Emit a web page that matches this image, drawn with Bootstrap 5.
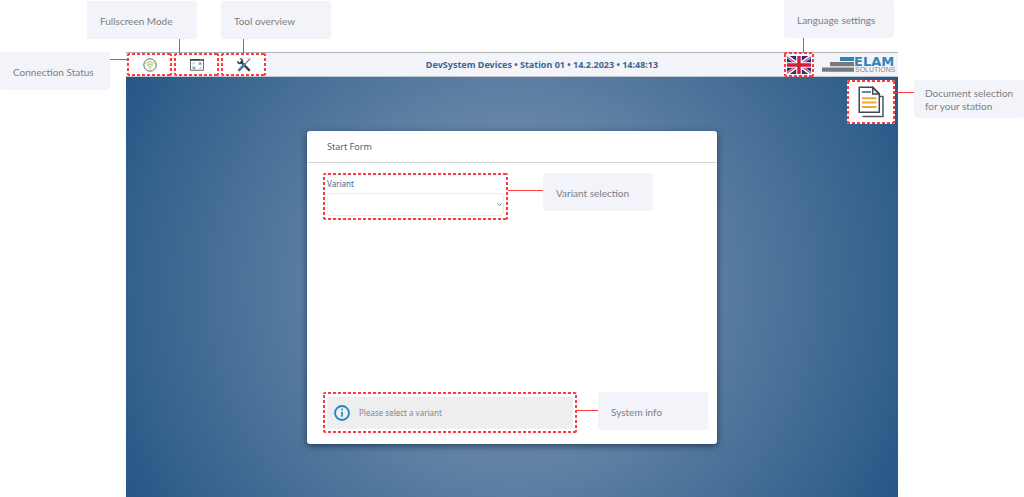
<!DOCTYPE html>
<html lang="en">
<head>
<meta charset="utf-8">
<meta name="viewport" content="width=device-width, initial-scale=1">
<title>Start Form</title>
<link href="https://cdn.jsdelivr.net/npm/bootstrap@5.3.0/dist/css/bootstrap.min.css" rel="stylesheet">
<style>
  :root { --mark: #ff3a3e; --panel: #f3f4f9; --ink: #3c6690; }
  body { font-family: "Noto Sans", "Open Sans", sans-serif; font-size: 8px; line-height: 12px; color: var(--ink); background: #fff; }
  .station { margin: 52px 126px 0; min-height: calc(100vh - 52px); }
  .topbar { background: var(--panel); border-top: 1px solid #b3b3b5; border-bottom: 1px solid #c3c7cd; height: 25px; padding-left: 1px; }
  .topbar .title { font-size: 9px; font-weight: 700; padding-left: 34px; }
  .toolset { gap: 2px; }
  .stage { background: radial-gradient(circle, #89a0b9 0%, #5a7da1 47%, #275786 100%); padding: 3px 3px 50px; }

  /* highlighted area with a dashed outline */
  .spot { position: relative; }
  .spot::after {
    content: ""; position: absolute; inset: 0; pointer-events: none; border-radius: 2px;
    background:
      repeating-linear-gradient(90deg, var(--mark) 0 3px, transparent 3px 5px) top / 100% 2px no-repeat,
      repeating-linear-gradient(90deg, var(--mark) 0 3px, transparent 3px 5px) bottom / 100% 2px no-repeat,
      repeating-linear-gradient(0deg, var(--mark) 0 3px, transparent 3px 5px) left / 2px 100% no-repeat,
      repeating-linear-gradient(0deg, var(--mark) 0 3px, transparent 3px 5px) right / 2px 100% no-repeat;
  }
  .tool { width: 45px; height: 23px; }
  .tool button, .docs button { background: #fff; border-radius: 2px; }
  .lang { width: 30px; height: 25px; }
  .docs { width: 48px; height: 44px; }

  /* callout box and its connector */
  .note { position: absolute; z-index: 2; width: 110px; height: 38px; padding: 2px 0 0 13px; background: var(--panel); border-radius: 3px; color: #7d7e82; font-family: Lato, "Open Sans", sans-serif; font-size: 10px; line-height: 13px; }
  .note::before { content: ""; position: absolute; background: var(--mark); }
  .note-up { bottom: calc(100% + 14px); left: 0; }
  .note-up::before { top: 100%; left: 22px; width: 1px; height: 15px; }
  .note-full { left: -87px; }
  .note-full::before { left: 92px; }
  .note-lang::before { left: 19px; }
  .note-left { right: calc(100% + 17px); top: -1px; }
  .note-left::before { left: 100%; top: 7px; width: 17px; height: 1px; }
  .note-right { left: calc(100% + var(--reach)); top: 0; }
  .note-right::before { right: 100%; top: var(--drop); width: var(--reach); height: 1px; }
  .note-docs { --reach: 19px; --drop: 12px; padding-left: 11px; }
  .note-variant { --reach: 35px; --drop: 17px; }
  .note-info { --reach: 21px; --drop: 18px; }

  .startform { width: 410px; min-height: 313px; border-radius: 3px; background: #fff; box-shadow: 0 2px 7px rgba(10, 30, 55, .65); margin-top: 7px; }
  .startform h1 { font-size: 9px; line-height: 14px; font-weight: 400; padding: 9px 20px 8px; border-bottom: 1px solid #d5d5d6; }
  .startform .fields { padding: 10px 16px 11px; }
  .variant { width: 185px; height: 47px; padding: 5px 4px 3px; }
  .variant label { line-height: 12px; margin-bottom: 3px; }
  .variant select { height: 23px; min-height: 0; padding: 0 16px 0 6px; font-size: 8px; border: 1px solid #ececee; border-radius: 3px; background-position: right 1px center; background-size: 5px 5px; }
  .info { width: 254px; height: 41px; padding: 5px 4px 4px; }
  .info output { background: #eee; border-radius: 2px; font-size: 8px; color: #85868a; padding-left: 7px; gap: 9px; }
</style>
</head>
<body>
<main class="station d-flex flex-column">
  <header class="topbar d-flex align-items-center">
    <div class="d-flex toolset">
      <div class="spot tool">
        <button type="button" class="btn p-0 border-0 w-100 h-100 d-flex align-items-center justify-content-center" aria-label="Connection status">
          <svg width="14" height="14" viewBox="0 0 14 14" fill="none"><circle cx="7" cy="7" r="6.2" stroke="#66676b"/><path d="M2.500 5.300Q7 1.500 11.500 5.300L7 11.200z" fill="#e3f1cc"/><path d="M2.500 5.400Q7 1.900 11.500 5.400M4 7.300Q7 5 10 7.300M5.500 9.200Q7 8 8.500 9.200" stroke="#b0d37a"/><circle cx="7" cy="10.700" r=".7" fill="#b0d37a"/></svg>
        </button>
        <div class="note note-left d-flex align-items-center">Connection Status</div>
      </div>
      <div class="spot tool">
        <button type="button" class="btn p-0 border-0 w-100 h-100 d-flex align-items-center justify-content-center" aria-label="Fullscreen mode">
          <svg width="14" height="12" viewBox="0 0 14 12" fill="none"><path d="M.5 1v10.3h13V1" stroke="#6c6e73"/><path d="M0 0h14v1.800H0z" fill="#424448"/><path d="M10 .8h.8M11.8.8h.8" stroke="#ddd" stroke-width=".7"/><path d="M8.3 6l2.5-2M8.4 3.9h2.5v2.3M5.7 7.5L3.2 9.700M3.1 7.3v2.5h2.5" stroke="#5d86aa" stroke-width=".9"/><path d="M3 5.7V4h2M11 7.7v2H9" stroke="#95a8b8" stroke-width=".7"/></svg>
        </button>
        <div class="note note-up note-full d-flex align-items-center">Fullscreen Mode</div>
      </div>
      <div class="spot tool">
        <button type="button" class="btn p-0 border-0 w-100 h-100 d-flex align-items-center justify-content-center" aria-label="Tool overview">
          <svg width="14" height="14" viewBox="0 0 14 14" fill="none"><path d="M4.2 4.2l7.9 7.9" stroke="#3d4046" stroke-width="2.4" stroke-linecap="round"/><path d="M2.5.4l2 2-.4 1.7-1.7.5-2-2C-.2 4.3.7 6.1 2.8 6.3c2.1.1 3.8-1.5 3.4-3.7C5.8.8 4.1-.1 2.5.4z" fill="#3d4046"/><path d="M12.9.9L7.2 6.8" stroke="#617f9d" stroke-width="1.2"/><path d="M7.3 6.7l-5.2 5.4" stroke="#4d7ba8" stroke-width="2.8" stroke-linecap="round"/><path d="M11.9.6l1.5 1.3" stroke="#526f8c" stroke-width="1"/></svg>
        </button>
        <div class="note note-up d-flex align-items-center">Tool overview</div>
      </div>
    </div>
    <div class="title mx-auto text-nowrap">DevSystem Devices • Station 01 • 14.2.2023 • 14:48:13</div>
    <div class="spot lang">
      <button type="button" class="btn p-0 border-0 w-100 h-100 d-flex align-items-center justify-content-center" aria-label="Language settings">
        <svg width="24" height="18" viewBox="0 0 24 18"><path fill="#27347c" d="M0 0h24v18H0z"/><path d="M0 0l24 18M24 0L0 18" stroke="#fff" stroke-width="3.2"/><path d="M0 .6L10 8M24 .6L14 8M0 17.4L10 10M24 17.4L14 10" stroke="#d42845" stroke-width="1.1"/><path d="M12 0v18M0 9h24" stroke="#fff" stroke-width="5.600"/><path d="M12 0v18M0 9h24" stroke="#d21c3c" stroke-width="3.4"/></svg>
      </button>
      <div class="note note-up note-lang d-flex align-items-center">Language settings</div>
    </div>
    <svg class="ms-2" width="76" height="18" viewBox="0 0 76 18" overflow="visible" role="img" aria-label="ELAM Solutions"><path fill="#3283b7" d="M18 1h14v4H18z"/><path fill="#77797c" d="M8 6h24v4.300H8zM0 11.500h32v4.300H0z"/><text x="32" y="10" font-family="DejaVu Sans, sans-serif" font-weight="700" font-size="13" fill="#3283b7">ELAM</text><text x="33" y="16" font-family="Liberation Sans, sans-serif" font-size="7" fill="#85878b">SOLUTIONS</text></svg>
  </header>

  <section class="stage flex-grow-1 d-flex flex-column">
    <div class="spot docs ms-auto">
      <button type="button" class="btn p-0 border-0 w-100 h-100 d-flex align-items-center justify-content-center" aria-label="Document selection">
        <svg width="26" height="32" viewBox="0 0 26 32" fill="none"><path d="M4.500 30.500h20.500V10.500h-3" stroke="#55575c" stroke-width="1.500"/><path d="M1.200 1.200H15l6.300 6.500v18.600H1.200z" fill="#fff" stroke="#45474c" stroke-width="1.500"/><path d="M14.700 1.500v6.500h6.300z" fill="#eee" stroke="#45474c" stroke-width="1.400"/><path d="M4 6h9" stroke="#4d7ba7" stroke-width="1.800"/><path d="M4 12.300h14.500M4 16.600h14.500M4 20.900h14.500" stroke="#e8ac36" stroke-width="2"/></svg>
      </button>
      <div class="note note-right note-docs d-flex align-items-center">Document selection<br>for your station</div>
    </div>

    <form class="startform mx-auto d-flex flex-column">
      <h1 class="m-0">Start Form</h1>
      <div class="fields flex-grow-1 d-flex flex-column justify-content-between">
        <div class="spot variant">
          <label class="d-block" for="variant">Variant</label>
          <select class="form-select shadow-none" id="variant"><option value="" selected></option></select>
          <div class="note note-right note-variant d-flex align-items-center">Variant selection</div>
        </div>
        <div class="spot info">
          <output class="d-flex align-items-center h-100">
            <svg width="16" height="16" viewBox="0 0 16 16" fill="none"><circle cx="8" cy="8" r="7" stroke="#2588c6" stroke-width="1.900"/><path d="M8 6.800v5" stroke="#2588c6" stroke-width="1.700"/><circle cx="8" cy="4.500" r="1" fill="#2588c6"/></svg>
            Please select a variant
          </output>
          <div class="note note-right note-info d-flex align-items-center">System info</div>
        </div>
      </div>
    </form>
  </section>
</main>
<script src="https://cdn.jsdelivr.net/npm/bootstrap@5.3.0/dist/js/bootstrap.bundle.min.js"></script>
</body>
</html>
